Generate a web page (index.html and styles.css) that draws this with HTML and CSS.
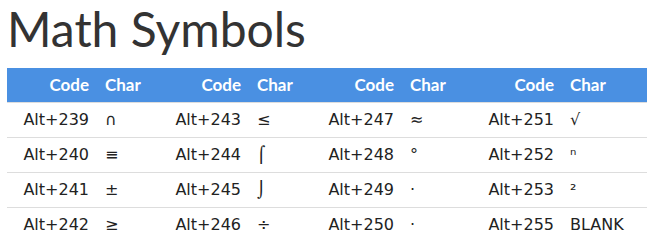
FILE: index.html
```html
<!DOCTYPE html>
<html lang="en">
<head>
  <meta charset="UTF-8" />
  <title>Math Symbols</title>
  <link rel="stylesheet" href="styles.css">
</head>
<body>
  <h1>Math Symbols</h1>
  <table class="codes">
    <colgroup>
      <col class="w-code1"><col class="w-char">
      <col class="w-code2"><col class="w-char">
      <col class="w-code3"><col class="w-char">
      <col class="w-code4"><col class="w-last">
    </colgroup>
    <thead>
      <tr>
        <th class="code">Code</th><th class="char">Char</th>
        <th class="code">Code</th><th class="char">Char</th>
        <th class="code">Code</th><th class="char">Char</th>
        <th class="code">Code</th><th class="char">Char</th>
      </tr>
    </thead>
    <tbody>
      <tr>
        <td class="code">Alt+239</td><td class="char">∩</td>
        <td class="code">Alt+243</td><td class="char">≤</td>
        <td class="code">Alt+247</td><td class="char">≈</td>
        <td class="code">Alt+251</td><td class="char">√</td>
      </tr>
      <tr>
        <td class="code">Alt+240</td><td class="char">≡</td>
        <td class="code">Alt+244</td><td class="char">⌠</td>
        <td class="code">Alt+248</td><td class="char">°</td>
        <td class="code">Alt+252</td><td class="char">ⁿ</td>
      </tr>
      <tr>
        <td class="code">Alt+241</td><td class="char">±</td>
        <td class="code">Alt+245</td><td class="char">⌡</td>
        <td class="code">Alt+249</td><td class="char">·</td>
        <td class="code">Alt+253</td><td class="char">²</td>
      </tr>
      <tr>
        <td class="code">Alt+242</td><td class="char">≥</td>
        <td class="code">Alt+246</td><td class="char">÷</td>
        <td class="code">Alt+250</td><td class="char">·</td>
        <td class="code">Alt+255</td><td class="char">BLANK</td>
      </tr>
    </tbody>
  </table>
</body>
</html>
```

FILE: styles.css
```css
body {
  margin: 0 7px;
  font-family: 'DejaVu Sans', sans-serif;
  color: #222;
  background: #fff;
}

h1 {
  font-family: 'Lato', sans-serif;
  font-weight: 400;
  font-size: 48px;
  line-height: 58px;
  color: #333;
  margin: 0 0 10px 0;
}

.codes {
  width: 640px;
  table-layout: fixed;
  border-collapse: collapse;
  font-size: 16px;
}

.w-code1 { width: 90px; }
.w-code2 { width: 92px; }
.w-code3 { width: 93px; }
.w-code4 { width: 100px; }
.w-char { width: 60px; }
.w-last { width: 85px; }

.codes th {
  background: #4a90e2;
  color: #fff;
  font-family: 'Lato', sans-serif;
  font-weight: 700;
  font-size: 17px;
  line-height: 20px;
  padding: 7px 8px;
  border-bottom: 1px solid #ddd;
}

.codes td {
  padding: 8px;
  line-height: 18px;
  border-bottom: 1px solid #ddd;
}

.codes tbody tr:last-child td {
  border-bottom: none;
}

.code {
  text-align: right;
}

.char {
  text-align: left;
}
```
